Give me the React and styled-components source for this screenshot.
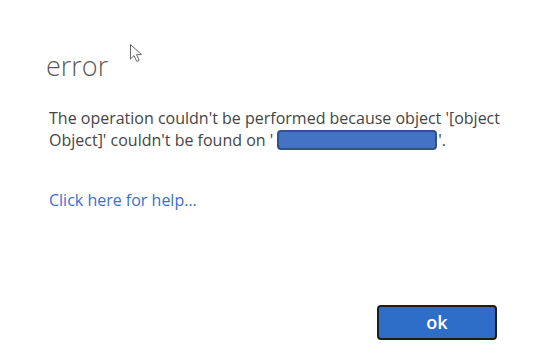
import React from "react";
import styled, { createGlobalStyle } from "styled-components";

const Global = createGlobalStyle`
  html, body { margin: 0; padding: 0; background: #ffffff; }
  body { width: 535px; height: 363px; overflow: hidden; }
`;

const Dialog = styled.div`
  position: relative;
  width: 535px;
  height: 363px;
  box-sizing: border-box;
  padding: 48px 30px 0 49px;
  display: flex;
  flex-direction: column;
  font-family: "Open Sans", "Noto Sans", sans-serif;
`;

const Title = styled.h1`
  margin: 0 0 0 -3px;
  font-size: 27px;
  font-weight: 300;
  line-height: 36px;
  color: #5a5a5a;
`;

const Message = styled.p`
  margin: 23px 0 0 0;
  font-size: 16px;
  line-height: 22px;
  color: #454545;
`;

const Redacted = styled.span`
  display: inline-block;
  box-sizing: border-box;
  width: 160px;
  height: 20px;
  margin: 0 1px 0 4px;
  vertical-align: -4px;
  background: #4472c4;
  border: 2px solid #2f528f;
  border-radius: 4px;
`;

const HelpLink = styled.a`
  margin-top: 39px;
  font-size: 16px;
  line-height: 20px;
  color: #3b6fd1;
  text-decoration: none;
  cursor: pointer;
`;

const Footer = styled.div`
  margin-top: auto;
  display: flex;
  justify-content: flex-end;
  padding: 0 8px 23px 0;
`;

const OkButton = styled.button`
  width: 120px;
  height: 35px;
  box-sizing: border-box;
  background: #2f6ec8;
  border: 2px solid #1c1c1c;
  border-radius: 4px;
  color: #ffffff;
  font-family: "Open Sans", "Noto Sans", sans-serif;
  font-size: 18px;
  font-weight: 600;
  line-height: 1;
  padding: 0 0 2px 0;
`;

const Cursor = styled.svg`
  position: absolute;
  left: 129px;
  top: 43px;
`;

export default function App() {
  return (
    <>
      <Global />
      <Dialog>
        <Title>error</Title>
        <Message>
          The operation couldn't be performed because object '[object Object]' couldn't be found on '<Redacted />'.
        </Message>
        <HelpLink>Click here for help...</HelpLink>
        <Footer>
          <OkButton>ok</OkButton>
        </Footer>
        <Cursor width="18" height="22" viewBox="0 0 18 22">
          <path
            d="M1.5 1.5 L1.5 16 L5 12.6 L7.8 18.5 L10.2 17.4 L7.5 11.6 L12.5 11.6 Z"
            fill="#ffffff"
            stroke="#6a6a6a"
            strokeWidth="1"
            strokeLinejoin="round"
          />
        </Cursor>
      </Dialog>
    </>
  );
}
